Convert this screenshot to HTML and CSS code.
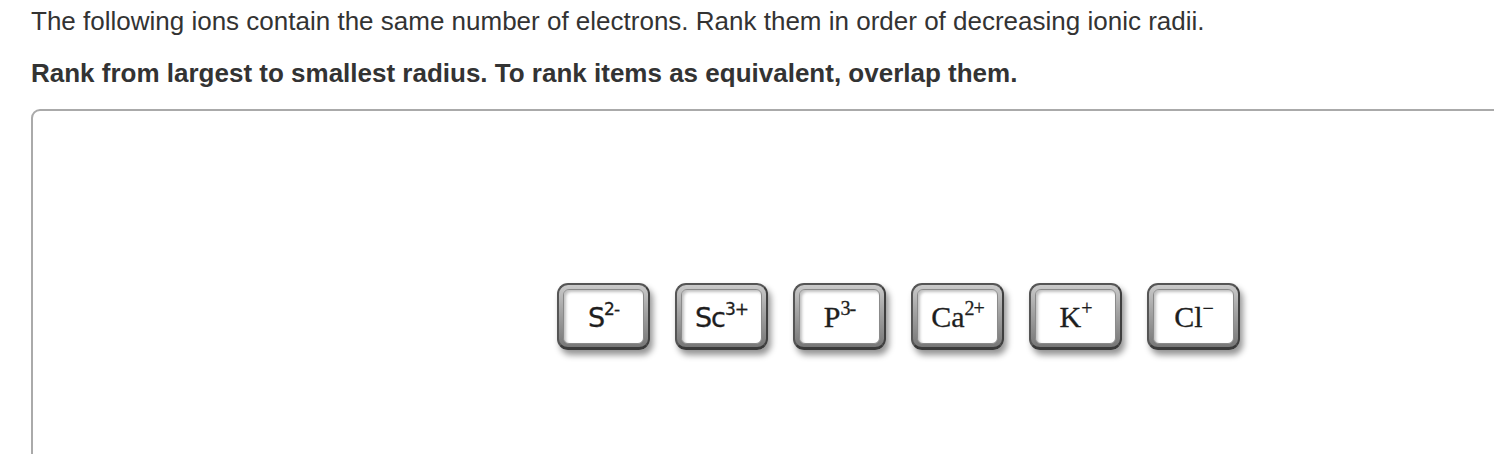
FILE: index.html
```html
<!DOCTYPE html>
<html lang="en">
<head>
<meta charset="utf-8">
<title>Ranking: ionic radii</title>
<link rel="stylesheet" href="styles.css">
</head>
<body>
<div class="question">
  <p class="prompt">The following ions contain the same number of electrons. Rank them in order of decreasing ionic radii.</p>
  <p class="instructions">Rank from largest to smallest radius. To rank items as equivalent, overlap them.</p>
  <div class="rank-area">
    <div class="tiles">
      <div class="tile"><div class="face sans"><span class="ion">S<sup>2-</sup></span></div></div>
      <div class="tile"><div class="face sans"><span class="ion">Sc<sup>3+</sup></span></div></div>
      <div class="tile"><div class="face serif"><span class="ion">P<sup>3-</sup></span></div></div>
      <div class="tile"><div class="face serif"><span class="ion">Ca<sup>2+</sup></span></div></div>
      <div class="tile"><div class="face serif"><span class="ion">K<sup>+</sup></span></div></div>
      <div class="tile"><div class="face serif"><span class="ion">Cl<sup>&minus;</sup></span></div></div>
    </div>
  </div>
</div>
</body>
</html>
```
FILE: styles.css
```css
html, body {
  margin: 0;
  padding: 0;
  background: #fff;
  overflow: hidden;
}

.question {
  padding: 6px 0 0 31px;
  font-family: "Liberation Sans", Arial, sans-serif;
  color: #333;
}

.prompt {
  margin: 0;
  font-size: 26px;
  line-height: 30px;
}

.instructions {
  margin: 22px 0 0;
  font-size: 26px;
  line-height: 30px;
  font-weight: bold;
}

.rank-area {
  margin-top: 21px;
  width: 1500px;
  height: 380px;
  border: 2px solid #aaa;
  border-radius: 9px;
  box-sizing: border-box;
  padding-top: 172px;
  padding-left: 524px;
}

.tiles {
  display: flex;
  gap: 25px;
}

/* bevelled ion tile */
.tile {
  width: 93px;
  height: 67px;
  box-sizing: border-box;
  border-radius: 11px;
  border: 2px solid #555;
  border-right-color: #3f3f3f;
  border-bottom: 3px solid #3a3a3a;
  padding: 4px 4px 3px;
  background: linear-gradient(180deg, #cacaca 0%, #a6a6a6 40%, #777 100%);
  box-shadow: 3px 5px 6px rgba(0, 0, 0, 0.42);
}

.face {
  height: 100%;
  box-sizing: border-box;
  border-radius: 6px;
  background: #fff;
  border: 1px solid #8a8a8a;
  box-shadow: inset 2px 2px 3px rgba(0, 0, 0, 0.25);
  display: flex;
  align-items: center;
  justify-content: center;
  color: #1e1e1e;
  padding-top: 1px;
}

.ion {
  line-height: 1;
  white-space: nowrap;
  -webkit-text-stroke: 0.3px #1e1e1e;
}

.ion sup {
  line-height: 0;
  vertical-align: 12px;
}

.sans {
  font-family: "DejaVu Sans", Verdana, sans-serif;
  font-size: 27px;
  letter-spacing: -1px;
}

.sans sup {
  font-size: 17px;
  letter-spacing: -1px;
}

.serif {
  font-family: "Liberation Serif", "Times New Roman", serif;
  font-size: 30px;
}

.serif sup {
  font-size: 20px;
  letter-spacing: -1px;
}
```
